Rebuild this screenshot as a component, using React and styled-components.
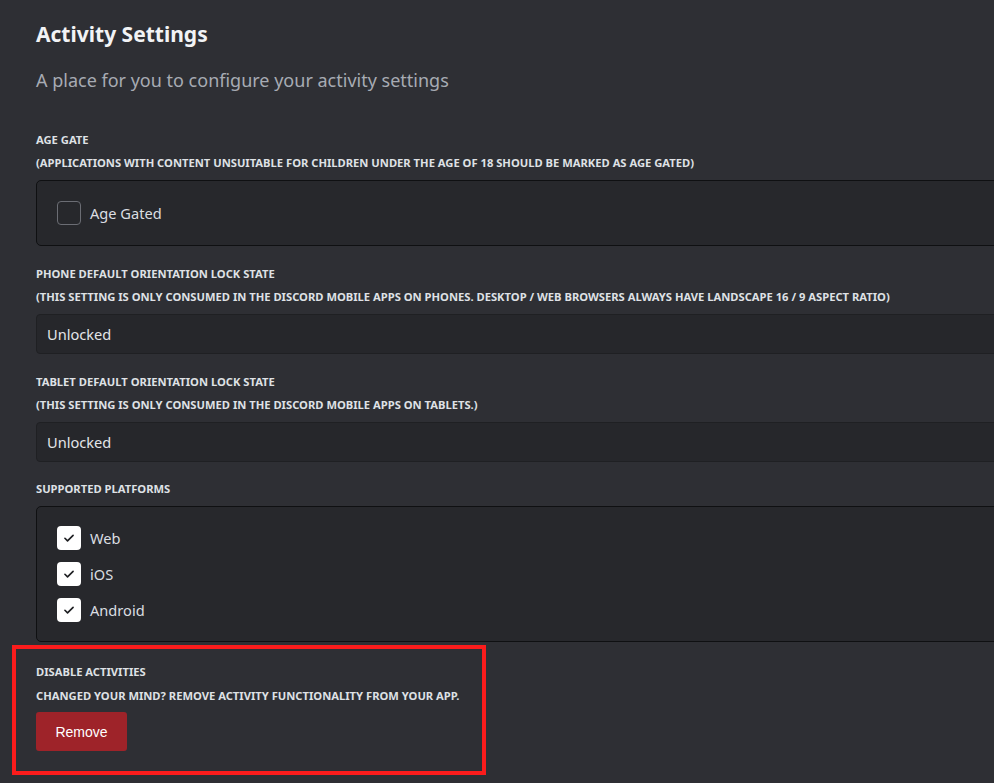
import styled, { createGlobalStyle } from 'styled-components'

const GlobalStyle = createGlobalStyle`
  html, body {
    margin: 0;
    padding: 0;
    background: #2e2f34;
    overflow: hidden;
  }
  body {
    font-family: "Noto Sans", "Open Sans", sans-serif;
  }
`

const Page = styled.div`
  width: 994px;
  height: 783px;
  overflow: hidden;
  background: #2e2f34;
  color: #dbdee1;
  box-sizing: border-box;
  padding: 18px 0 0 36px;
`

const Inner = styled.div`
  width: 1100px;
  display: flex;
  flex-direction: column;
`

const Title = styled.h1`
  margin: 0;
  font-size: 21px;
  line-height: 32px;
  font-weight: 700;
  color: #f2f3f5;
`

const Subtitle = styled.p`
  margin: 18px 0 0;
  font-size: 18px;
  line-height: 24px;
  color: #a7abb3;
`

const Section = styled.section`
  display: flex;
  flex-direction: column;
  margin-top: ${p => p.$top || 20}px;
`

const Label = styled.div`
  font-size: 11.2px;
  line-height: 16px;
  font-weight: 700;
  color: #dfe1e5;
  text-transform: uppercase;
  white-space: nowrap;
`

const Hint = styled(Label)`
  margin-top: 7px;
`

const Box = styled.div`
  margin-top: 9px;
  background: #27282c;
  border: 1px solid #0f1012;
  border-radius: 5px;
  padding: ${p => p.$pad || 20}px 20px;
  display: flex;
  flex-direction: column;
  gap: 12px;
`

const Check = styled.label`
  display: flex;
  align-items: center;
  gap: 9px;
  font-size: 14.6px;
  line-height: 24px;
  color: #dbdee1;
`

const Square = styled.span`
  width: 24px;
  height: 24px;
  box-sizing: border-box;
  border-radius: 4px;
  display: flex;
  align-items: center;
  justify-content: center;
  background: ${p => (p.$on ? '#ffffff' : 'transparent')};
  border: ${p => (p.$on ? 'none' : '1px solid #6b6d74')};
`

const Select = styled.div`
  margin-top: 9px;
  height: 40px;
  box-sizing: border-box;
  background: #26272b;
  border: 1px solid #1f2023;
  border-radius: 4px;
  padding: 0 10px;
  display: flex;
  align-items: center;
  font-size: 14.6px;
  color: #e3e5e8;
`

const Danger = styled.section`
  margin: 3px 0 0 -24px;
  width: 474px;
  height: 130px;
  box-sizing: border-box;
  border: 4px solid #fb1c1c;
  padding: 15px 20px 0;
  display: flex;
  flex-direction: column;
  align-items: flex-start;
`

const DangerHint = styled(Hint)`
  margin-top: 8px;
`

const RemoveButton = styled.button`
  margin-top: 8px;
  width: 91px;
  height: 39px;
  border: none;
  border-radius: 3px;
  background: #9e2329;
  color: #ffffff;
  font-family: "Liberation Sans", Arial, sans-serif;
  font-size: 14px;
  font-weight: 500;
`

const Tick = () => (
  <svg width="14" height="14" viewBox="0 0 24 24" fill="none">
    <path d="M5 12.5l4.5 4.5L19 7.5" stroke="#1e1f22" strokeWidth="2.8" strokeLinecap="round" strokeLinejoin="round" />
  </svg>
)

const App = () => {
  const platforms = ['Web', 'iOS', 'Android']

  return (
    <Page>
      <GlobalStyle />
      <Inner>
        <Title>Activity Settings</Title>
        <Subtitle>A place for you to configure your activity settings</Subtitle>

        <Section $top={40}>
          <Label>Age Gate</Label>
          <Hint>(Applications with content unsuitable for children under the age of 18 should be marked as age gated)</Hint>
          <Box>
            <Check>
              <Square />
              Age Gated
            </Check>
          </Box>
        </Section>

        <Section>
          <Label>Phone Default Orientation Lock State</Label>
          <Hint>(This setting is only consumed in the Discord mobile apps on phones. Desktop / Web browsers always have landscape 16 / 9 aspect ratio)</Hint>
          <Select>Unlocked</Select>
        </Section>

        <Section>
          <Label>Tablet Default Orientation Lock State</Label>
          <Hint>(This setting is only consumed in the Discord mobile apps on tablets.)</Hint>
          <Select>Unlocked</Select>
        </Section>

        <Section $top={19}>
          <Label>Supported Platforms</Label>
          <Box $pad={19}>
            {platforms.map(p => (
              <Check key={p}>
                <Square $on>
                  <Tick />
                </Square>
                {p}
              </Check>
            ))}
          </Box>
        </Section>

        <Danger>
          <Label>Disable Activities</Label>
          <DangerHint>Changed your mind? Remove activity functionality from your app.</DangerHint>
          <RemoveButton>Remove</RemoveButton>
        </Danger>
      </Inner>
    </Page>
  )
}

export default App
